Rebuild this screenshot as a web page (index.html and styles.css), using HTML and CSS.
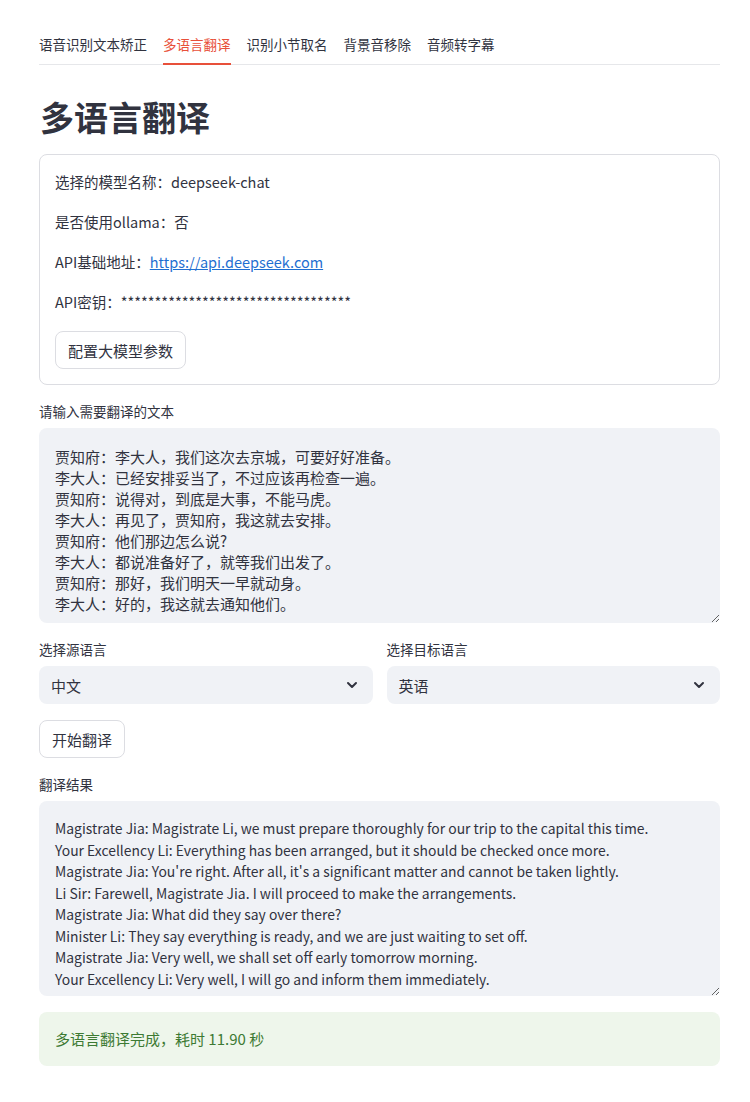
FILE: index.html
```html
<!DOCTYPE html>
<html lang="zh-CN">
<head>
  <meta charset="UTF-8">
  <meta name="viewport" content="width=device-width, initial-scale=1.0">
  <title>多语言翻译</title>
  <link rel="stylesheet" href="styles.css">
</head>
<body>
  <div class="container">
    <nav class="tabs">
      <a class="tab">语音识别文本矫正</a>
      <a class="tab active">多语言翻译</a>
      <a class="tab">识别小节取名</a>
      <a class="tab">背景音移除</a>
      <a class="tab">音频转字幕</a>
    </nav>

    <h1>多语言翻译</h1>

    <section class="config-box">
      <p>选择的模型名称：deepseek-chat</p>
      <p>是否使用ollama：否</p>
      <p>API基础地址：<a href="#" class="link">https://api.deepseek.com</a></p>
      <p>API密钥：**********************************</p>
      <button class="button">配置大模型参数</button>
    </section>

    <label class="field-label">请输入需要翻译的文本</label>
    <textarea class="text-area source" readonly>贾知府：李大人，我们这次去京城，可要好好准备。
李大人：已经安排妥当了，不过应该再检查一遍。
贾知府：说得对，到底是大事，不能马虎。
李大人：再见了，贾知府，我这就去安排。
贾知府：他们那边怎么说?
李大人：都说准备好了，就等我们出发了。
贾知府：那好，我们明天一早就动身。
李大人：好的，我这就去通知他们。</textarea>

    <div class="select-row">
      <div class="select-col">
        <label class="field-label">选择源语言</label>
        <div class="select">
          <span>中文</span>
          <svg class="chevron" viewBox="0 0 24 24" width="16" height="16"><path d="M6 9l6 6 6-6" fill="none" stroke="#31333f" stroke-width="3" stroke-linecap="round" stroke-linejoin="round"/></svg>
        </div>
      </div>
      <div class="select-col">
        <label class="field-label">选择目标语言</label>
        <div class="select">
          <span>英语</span>
          <svg class="chevron" viewBox="0 0 24 24" width="16" height="16"><path d="M6 9l6 6 6-6" fill="none" stroke="#31333f" stroke-width="3" stroke-linecap="round" stroke-linejoin="round"/></svg>
        </div>
      </div>
    </div>

    <button class="button start-btn">开始翻译</button>

    <label class="field-label">翻译结果</label>
    <textarea class="text-area result" readonly>Magistrate Jia: Magistrate Li, we must prepare thoroughly for our trip to the capital this time.
Your Excellency Li: Everything has been arranged, but it should be checked once more.
Magistrate Jia: You're right. After all, it's a significant matter and cannot be taken lightly.
Li Sir: Farewell, Magistrate Jia. I will proceed to make the arrangements.
Magistrate Jia: What did they say over there?
Minister Li: They say everything is ready, and we are just waiting to set off.
Magistrate Jia: Very well, we shall set off early tomorrow morning.
Your Excellency Li: Very well, I will go and inform them immediately.</textarea>

    <div class="success">多语言翻译完成，耗时 11.90 秒</div>
  </div>
</body>
</html>
```

FILE: styles.css
```css
:root {
  --text-color: #31333f;
  --input-bg: #f0f2f6;
  --border-color: #dcdde2;
  --accent-color: #e8503a;
  --link-color: #1f6fd1;
}

* {
  box-sizing: border-box;
  margin: 0;
  padding: 0;
}

body {
  font-family: "Noto Sans CJK SC", "Source Sans Pro", sans-serif;
  color: var(--text-color);
  background-color: white;
  font-size: 14.5px;
}

.container {
  padding: 0 30px 0 39px;
}

.tabs {
  display: flex;
  gap: 16px;
  margin-top: 33px;
  border-bottom: 1px solid #e6e7ea;
}

.tab {
  font-size: 13.5px;
  line-height: 22px;
  padding-bottom: 8px;
  border-bottom: 2px solid transparent;
  margin-bottom: -1px;
}

.tab.active {
  color: var(--accent-color);
  border-bottom-color: var(--accent-color);
}

h1 {
  font-size: 34px;
  font-weight: 700;
  line-height: 44px;
  margin: 30px 0 15px 1px;
}

.config-box {
  border: 1px solid var(--border-color);
  border-radius: 8px;
  padding: 17px 15px 15px;
  margin-bottom: 16px;
}

.config-box p {
  line-height: 20px;
  margin-bottom: 20px;
}

.link {
  color: var(--link-color);
}

.button {
  font-family: inherit;
  font-size: 15px;
  color: var(--text-color);
  background: white;
  border: 1px solid var(--border-color);
  border-radius: 8px;
  height: 38px;
  padding: 0 12px;
  margin-top: -1px;
}

.field-label {
  display: block;
  font-size: 13.5px;
  line-height: 20px;
  margin-bottom: 7px;
}

.text-area {
  display: block;
  width: 100%;
  height: 195px;
  font-family: inherit;
  font-size: 15px;
  line-height: 21px;
  color: var(--text-color);
  background-color: var(--input-bg);
  border: none;
  border-radius: 8px;
  padding: 18px 16px 16px;
  margin-bottom: 16px;
  overflow: hidden;
}

.text-area.result {
  font-size: 13.9px;
  line-height: 21.5px;
  padding-top: 17px;
  margin-bottom: 16px;
}

.select-row {
  display: flex;
  gap: 14px;
  margin-bottom: 16px;
}

.select-col {
  flex: 1;
}

.select {
  display: flex;
  align-items: center;
  justify-content: space-between;
  height: 38px;
  background-color: var(--input-bg);
  border-radius: 8px;
  padding: 0 13px 0 12px;
  font-size: 15px;
}

.start-btn {
  margin-top: 0;
  margin-bottom: 16px;
}

.success {
  background-color: #eef6eb;
  color: #3d7a33;
  font-size: 15px;
  border-radius: 8px;
  padding: 16px 16px;
  line-height: 22px;
}
```
